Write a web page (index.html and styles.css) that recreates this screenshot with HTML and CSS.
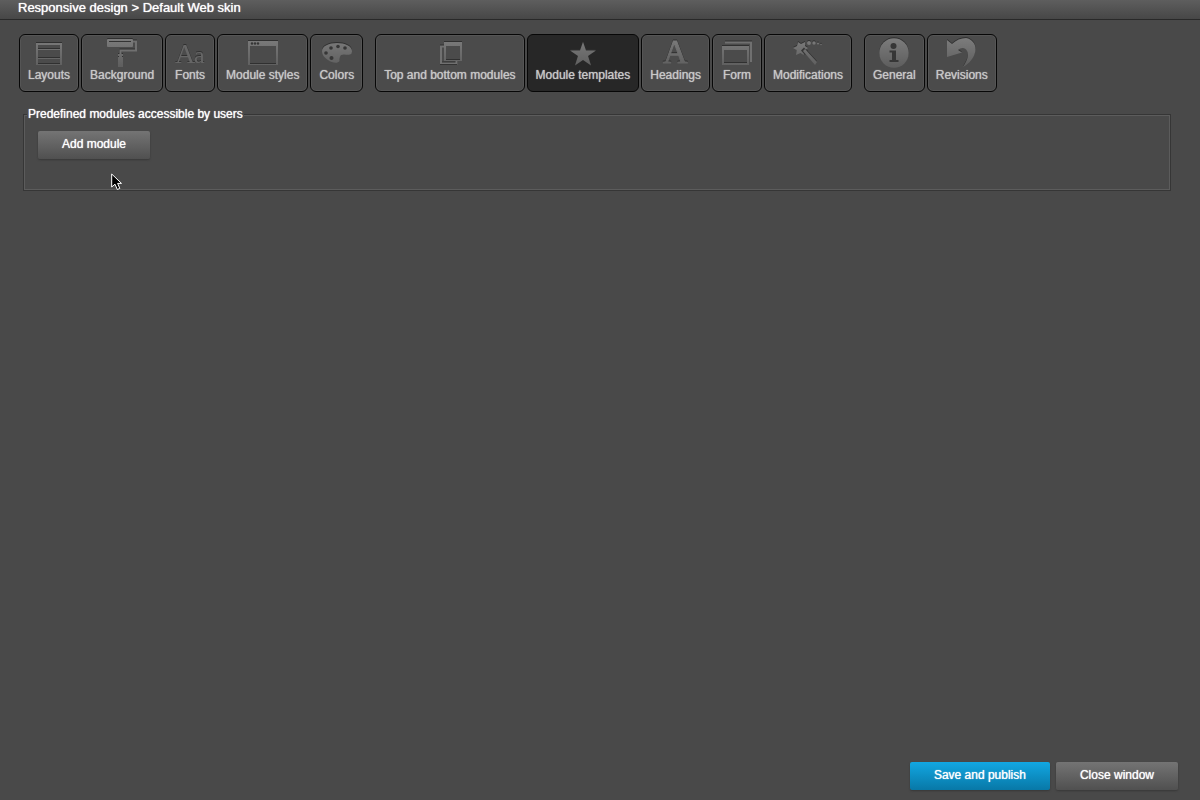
FILE: index.html
```html
<!DOCTYPE html>
<html lang="en">
<head>
<meta charset="utf-8">
<title>Responsive design</title>
<link rel="stylesheet" href="styles.css">
</head>
<body>
<svg class="defs" aria-hidden="true">
  <defs>
    <linearGradient id="metal" gradientUnits="userSpaceOnUse" x1="0" y1="2" x2="0" y2="28">
      <stop offset="0" stop-color="#7a7a7a"/><stop offset="1" stop-color="#5f5f5f"/>
    </linearGradient>
  </defs>
</svg>
<header class="titlebar"><h1 class="title">Responsive design &gt; Default Web skin</h1></header>
<nav class="toolbar">
  <div class="group">
    <button class="tool" type="button">
      <svg class="icon" viewBox="0 0 30 30" aria-hidden="true"><path class="fill" fill-rule="evenodd" d="M2 5H28V27H2ZM4 7V11H26V7ZM4 12V20H26V12ZM4 21V26H26V21Z"/></svg>
      <span>Layouts</span></button>
    <button class="tool" type="button">
      <svg class="icon" viewBox="0 0 30 30" aria-hidden="true"><rect class="fill" x="0" y="1" width="26" height="8" rx="1"/><path class="thin" d="M26 3.500H29V12.500H13.500V17"/><path class="dark" d="M2 3.500H24M11 16.500H16"/><path class="fill" d="M11 16H16V18H15V19H16V29H11V19H12V18H11Z"/></svg>
      <span>Background</span></button>
    <button class="tool" type="button">
      <svg class="icon" viewBox="0 0 30 30" aria-hidden="true"><text class="glyph" x="0" y="25">A</text><text class="glyph small" x="19" y="25">a</text></svg>
      <span>Fonts</span></button>
    <button class="tool" type="button">
      <svg class="icon" viewBox="0 0 30 30" aria-hidden="true"><path class="fill" fill-rule="evenodd" d="M0 3H30V27H0ZM2 8V26H28V8Z"/><g class="hole"><circle cx="4" cy="5.500" r="1.200"/><circle cx="7" cy="5.500" r="1.200"/><circle cx="10" cy="5.500" r="1.200"/></g></svg>
      <span>Module styles</span></button>
    <button class="tool" type="button">
      <svg class="icon" viewBox="0 0 30 30" aria-hidden="true"><path class="fill" d="M15 5C23 5 30 8 30 13C30 17 28 17 22 16.500C17 16.500 18 20 17.500 23C16 26 10 25 6 22C2 19 0 17 0 13C0 8 7 5 15 5Z"/><g class="hole"><circle cx="9" cy="10" r="1.800"/><circle cx="16" cy="8.500" r="1.800"/><circle cx="23" cy="10" r="1.800"/><circle cx="4" cy="15" r="1.800"/><circle cx="9.500" cy="20" r="2"/></g></svg>
      <span>Colors</span></button>
  </div>
  <div class="group">
    <button class="tool" type="button">
      <svg class="icon" viewBox="0 0 30 30" aria-hidden="true"><path class="thin" d="M9 8.500H6V25.500H21.500V23"/><path class="dark" d="M5 26.500H22"/><path class="fill" fill-rule="evenodd" d="M9 4H27V23H9ZM11 8V22H25V8Z"/></svg>
      <span>Top and bottom modules</span></button>
    <button class="tool active" type="button" aria-pressed="true">
      <svg class="icon" viewBox="0 0 30 30" aria-hidden="true"><path class="fill" d="M15 4L18 12.500H28L20 18L23 27.500L15 22L7 27.500L10 18L2 12.500H12Z"/></svg>
      <span>Module templates</span></button>
    <button class="tool" type="button">
      <svg class="icon" viewBox="0 0 30 30" aria-hidden="true"><text class="glyph heavy" x="2" y="25">A</text></svg>
      <span>Headings</span></button>
    <button class="tool" type="button">
      <svg class="icon" viewBox="0 0 30 30" aria-hidden="true"><path class="thin" d="M3 4.500H29V24"/><path class="fill" fill-rule="evenodd" d="M0 8H27V27H0ZM2 12V25H25V12Z"/></svg>
      <span>Form</span></button>
    <button class="tool" type="button">
      <svg class="icon" viewBox="0 0 30 30" aria-hidden="true"><path class="fill" d="M5 4L8 6L12 4L12 8L15 10L12 12.500L10.500 17L7.500 15L3 17L3.500 12L0 10L4 8Z"/><path class="hole" d="M8 12.500L11 9.500L15 14L12 17Z"/><path class="fill" d="M10 13L12 11L24 24L22 27Z"/><g class="fill"><circle cx="16" cy="5" r="2"/><circle cx="21" cy="5" r="1.700"/><circle cx="25" cy="5.500" r="1"/><circle cx="28" cy="6.500" r=".7"/></g></svg>
      <span>Modifications</span></button>
  </div>
  <div class="group">
    <button class="tool" type="button">
      <svg class="icon" viewBox="0 0 30 30" aria-hidden="true"><circle class="fill" cx="15" cy="15" r="14.700"/><g class="hole"><circle cx="14.500" cy="8" r="3"/><path d="M10.500 12.500H17V22H19.500V24H10.500V22H13V14.500H10.500Z"/></g></svg>
      <span>General</span></button>
    <button class="tool" type="button">
      <svg class="icon" viewBox="0 0 30 30" aria-hidden="true"><path class="fill" d="M0 2L5 6C9 2 14 0 19 0C25 1 29 6 28.500 12C28 19 22 26 16 29C19 24 22 19 20.500 14C19 9 14 9 11 12L15 14.500L0 19Z"/></svg>
      <span>Revisions</span></button>
  </div>
</nav>
<main class="content">
  <fieldset class="panel">
    <legend>Predefined modules accessible by users</legend>
    <button class="btn" type="button">Add module</button>
  </fieldset>
</main>
<footer class="footer">
  <button class="btn primary" type="button">Save and publish</button>
  <button class="btn" type="button">Close window</button>
</footer>
<svg class="cursor" viewBox="0 0 12 18" aria-hidden="true"><path d="M.7 1V14L4 11.200L6.300 16.500L8.800 15.400L6.600 10.400H10.500Z"/></svg>
</body>
</html>
```

FILE: styles.css
```css
* { box-sizing: border-box; }
body {
  margin: 0;
  min-height: 100vh;
  display: flex;
  flex-direction: column;
  position: relative;
  background: #494949;
  color: #fff;
  font: 12px/16px "Liberation Sans", Arial, sans-serif;
  text-shadow: 0 0 1px currentColor;
}
button { font: inherit; text-shadow: inherit; }
.defs { position: absolute; width: 0; height: 0; }
.titlebar {
  height: 20px;
  padding: 0 18px;
  background: linear-gradient(#5e5e5e, #474747);
  border-bottom: 1px solid #292929;
}
.title { margin: 0; font-size: 13px; font-weight: 400; line-height: 16px; }
.toolbar { display: flex; flex-wrap: wrap; gap: 12px; padding: 14px 19px 0; }
.group { display: flex; gap: 2px; }
.tool {
  display: flex;
  flex-direction: column;
  align-items: center;
  min-width: 50px;
  height: 58px;
  padding: 3px 8px 0;
  border: 1px solid #070707;
  border-radius: 6px;
  background: #4b4b4b;
  box-shadow: inset 0 0 0 1px #555;
  color: #c8c8c8;
  line-height: 14px;
  white-space: nowrap;
}
.tool.active { background: #272727; box-shadow: none; }
.icon {
  width: 30px;
  height: 30px;
  overflow: visible;
  text-shadow: none;
  filter: drop-shadow(0 -1px 0 #303030);
}
.fill { fill: url(#metal); }
.thin { fill: none; stroke: #707070; stroke-width: 2; }
.dark { fill: none; stroke: #333; stroke-width: 1; }
.hole { fill: #363636; }
.glyph { font: 28px "Liberation Serif", serif; fill: #666; }
.glyph.small { font-size: 24px; }
.glyph.heavy { font-size: 34px; fill: url(#metal); stroke: url(#metal); stroke-width: 1; }
.content { flex: 1; padding: 15px 29px 0 23px; }
.panel {
  margin: 0;
  min-height: 84px;
  padding: 10px 14px 30px;
  border: 1px solid #363636;
  box-shadow: inset 0 0 0 1px #5c5c5c;
}
.panel legend { margin-left: -11px; padding: 0 1px; background: #494949; line-height: 14px; }
.btn {
  height: 28px;
  padding: 0 24px 2px;
  border: 0;
  border-radius: 2px;
  background: linear-gradient(#747474, #505050);
  box-shadow: 0 1px 2px #383838;
  color: #fff;
}
.btn.primary { background: linear-gradient(#12a7e2, #0878a7); }
.footer { display: flex; justify-content: flex-end; gap: 6px; padding: 0 22px 10px; }
.cursor {
  position: absolute;
  left: 111px;
  top: 173px;
  width: 12px;
  height: 18px;
  fill: #000;
  stroke: #fff;
  stroke-width: 1;
}
```
